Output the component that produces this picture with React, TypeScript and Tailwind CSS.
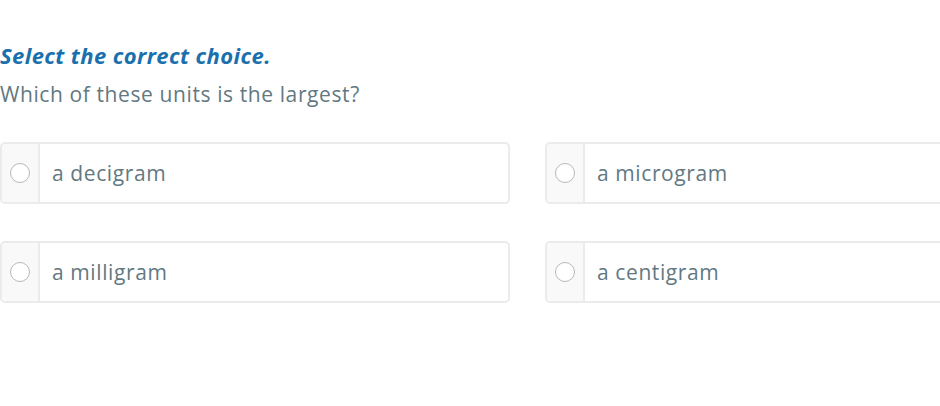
const options = ["a decigram", "a microgram", "a milligram", "a centigram"]

function Choice({ label }: { label: string }) {
  return (
    <div className="flex h-[62px] overflow-hidden rounded-[5px] border-2 border-[#ebebeb] bg-white">
      <div className="flex w-[38px] shrink-0 items-center justify-center border-r-2 border-[#ebebeb] bg-[#f9f9f9]">
        <span className="block h-[20px] w-[20px] rounded-full border border-[#b8b8b8] bg-white" />
      </div>
      <div className="flex items-center pl-[12px] pt-[1px] text-[21px] tracking-[0.6px] text-[#627982]">{label}</div>
    </div>
  )
}

export default function App() {
  return (
    <div
      className="h-[406px] w-[940px] overflow-hidden bg-white pt-[40px]"
      style={{ fontFamily: '"Open Sans", "Noto Sans", sans-serif' }}
    >
      <div className="text-[22px] font-bold italic leading-[30px] tracking-[0.4px] text-[#1a70ad]">
        Select the correct choice.
      </div>
      <div className="mt-[9px] text-[21px] leading-[30px] tracking-[0.6px] text-[#627982]">
        Which of these units is the largest?
      </div>
      <div className="mt-[33px] grid w-[1056px] grid-cols-[510px_510px] gap-x-[35px] gap-y-[37px]">
        {options.map((o) => (
          <Choice key={o} label={o} />
        ))}
      </div>
    </div>
  )
}
